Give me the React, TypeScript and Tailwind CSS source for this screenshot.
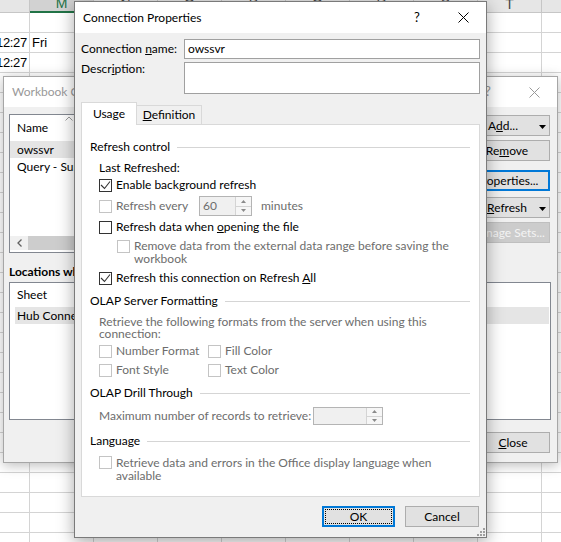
import React from 'react';

const COLS = ['L', 'M', 'N', 'O', 'P', 'Q', 'R', 'S', 'T', 'U'];

function cellText(row: number, col: string) {
  if (row === 1 && col === 'L') return '12:27';
  if (row === 1 && col === 'M') return 'Fri';
  if (row === 2 && col === 'L') return '12:27';
  return '';
}

function Sheet() {
  const rows = Array.from({ length: 27 }, (_, i) => i);
  return (
    <div className="font-['Liberation_Sans',sans-serif]">
      {/* column headers */}
      <div className="flex h-[13px]">
        {COLS.map((c, i) => (
          <div
            key={c}
            className={`${i === 0 ? 'w-[30px]' : 'w-[64px]'} shrink-0 h-[13px] flex justify-center items-end overflow-hidden border-r ${
              c === 'M'
                ? 'bg-[#d2d2d2] border-b-2 border-b-[#217346] border-r-[#c6c6c6] text-[#217346]'
                : 'bg-[#e6e6e6] border-b border-[#c6c6c6] text-[#444]'
            }`}
          >
            {i > 0 && <span className="text-[14px] leading-[14px] mb-[1px]">{c}</span>}
          </div>
        ))}
      </div>
      {rows.map((r) => (
        <div key={r} className="flex h-[20px]">
          {COLS.map((c, i) => (
            <div
              key={c}
              className={`${i === 0 ? 'w-[30px] justify-end pr-[2px] tracking-[-0.3px]' : 'w-[64px] pl-[2px]'} shrink-0 h-[20px] overflow-hidden border-r border-b border-[#d4d4d4] flex items-end pb-[1px] text-[13px] leading-[16px] text-black`}
            >
              {cellText(r, c)}
            </div>
          ))}
        </div>
      ))}
    </div>
  );
}

function XIcon({ color }: { color: string }) {
  return (
    <svg width="11" height="11" viewBox="0 0 11 11">
      <path d="M0.5 0.5 L10.5 10.5 M10.5 0.5 L0.5 10.5" stroke={color} strokeWidth="1" fill="none" />
    </svg>
  );
}

function Box({ checked = false, disabled = false, className = '' }: { checked?: boolean; disabled?: boolean; className?: string }) {
  return (
    <span
      className={`w-[13px] h-[13px] shrink-0 border bg-white flex items-center justify-center ${
        disabled ? 'border-[#c4c4c4]' : 'border-[#333]'
      } ${className}`}
    >
      {checked && (
        <svg width="11" height="11" viewBox="0 0 11 11">
          <path d="M1 5 L4.5 8.5 L10 1.5" fill="none" stroke="#333" strokeWidth="1.1" />
        </svg>
      )}
    </span>
  );
}

function CheckRow({
  checked = false,
  disabled = false,
  className = '',
  children,
}: {
  checked?: boolean;
  disabled?: boolean;
  className?: string;
  children: React.ReactNode;
}) {
  return (
    <div className={`flex items-center gap-[4px] h-[16px] ${className}`}>
      <Box checked={checked} disabled={disabled} />
      <span className={disabled ? 'text-[#6d6d6d]' : 'text-black'}>{children}</span>
    </div>
  );
}

function Group({ title, className = '' }: { title: string; className?: string }) {
  return (
    <div className={`flex items-center gap-[7px] h-[16px] ${className}`}>
      <span>{title}</span>
      <span className="flex-1 h-px bg-[#d5d5d5]" />
    </div>
  );
}

function Tri({ up = false }: { up?: boolean }) {
  return (
    <svg width="5" height="3" viewBox="0 0 5 3">
      <path d={up ? 'M0 3 L2.5 0 L5 3 Z' : 'M0 0 L2.5 3 L5 0 Z'} fill="#8a8a8a" />
    </svg>
  );
}

function Spin({ className, value = '' }: { className: string; value?: string }) {
  return (
    <div className={`flex border border-[#b4b4b4] bg-[#f0f0f0] ${className}`}>
      <span className="flex-1 pl-[3px] text-[#6d6d6d] flex items-center">{value}</span>
      <span className="w-[16px] flex flex-col border-l border-[#d4d4d4] bg-[#f6f6f6]">
        <span className="flex-1 flex items-center justify-center border-b border-[#d4d4d4]">
          <Tri up />
        </span>
        <span className="flex-1 flex items-center justify-center">
          <Tri />
        </span>
      </span>
    </div>
  );
}

function Arrow() {
  return (
    <svg width="7" height="4" viewBox="0 0 7 4" className="absolute right-[3px] top-[9px]">
      <path d="M0 0 L3.5 4 L7 0 Z" fill="#000" />
    </svg>
  );
}

function WorkbookDialog() {
  return (
    <div className="absolute left-[3px] top-[76px] w-[555px] h-[387px] border border-[#a6a6a6] bg-[#f0f0f0] shadow-[0_2px_12px_rgba(0,0,0,0.28)] flex flex-col">
      <div className="h-[30px] shrink-0 bg-white flex items-center pl-[8px] text-[#999]">
        <span className="flex-1">Workbook Connections</span>
        <span className="w-[46px] text-center text-[13px]">?</span>
        <span className="w-[46px] flex justify-center">
          <XIcon color="#999" />
        </span>
      </div>
      <div className="flex-1 pl-[5px] pr-[6px] pt-[7px] flex flex-col">
        <div className="flex gap-[8px]">
          {/* connections list */}
          <div className="w-[447px] h-[139px] shrink-0 border border-[#828790] bg-white flex flex-col">
            <div className="relative h-[26px] pl-[7px] flex items-center">
              Name
              <svg width="8" height="5" viewBox="0 0 8 5" className="absolute left-[55px] top-[1px]">
                <path d="M0.5 4.5 L4 1 L7.5 4.5" fill="none" stroke="#9a9a9a" />
              </svg>
            </div>
            <div className="h-[17px] pl-[7px] bg-[#e5e5e5] flex items-center">owssvr</div>
            <div className="h-[17px] pl-[7px] flex items-center">Query - Summary</div>
            <div className="mt-auto mb-[2px] h-[14px] bg-[#f0f0f0] flex items-center">
              <span className="w-[18px] flex justify-center">
                <svg width="5" height="8" viewBox="0 0 5 8">
                  <path d="M4.5 0.5 L1 4 L4.5 7.5" fill="none" stroke="#606060" strokeWidth="1.3" />
                </svg>
              </span>
              <span className="w-[300px] h-[14px] bg-[#cdcdcd]" />
            </div>
          </div>
          {/* action buttons */}
          <div className="w-[86px] flex flex-col mt-[1px]">
            <div className="relative h-[21px] border border-[#adadad] bg-[#e1e1e1] flex items-center justify-center pr-[8px]">
              A<u>d</u>d...
              <Arrow />
            </div>
            <div className="mt-[4px] h-[21px] border border-[#adadad] bg-[#e1e1e1] flex items-center justify-center">
              Re<u>m</u>ove
            </div>
            <div className="mt-[9px] h-[21px] border-2 border-[#0078d7] bg-[#e1e1e1] flex items-center justify-center">
              Properties...
            </div>
            <div className="relative mt-[6px] h-[21px] border border-[#adadad] bg-[#e1e1e1] flex items-center justify-center">
              <span>
                <u>R</u>efresh
              </span>
              <Arrow />
            </div>
            <div className="mt-[4px] h-[21px] border border-[#bfbfbf] bg-[#cccccc] text-[#f4f4f4] flex items-center justify-center">
              Manage Sets...
            </div>
          </div>
        </div>
        <div className="mt-[11px] h-[16px] leading-[16px] font-bold">
          Locations where this connection is used in this workbook
        </div>
        <div className="mt-[2px] w-[542px] h-[138px] border border-[#828790] bg-white flex flex-col">
          <div className="h-[24px] pl-[7px] flex items-center">Sheet</div>
          <div className="h-[17px] ml-[5px] mr-[1px] pl-[2px] bg-[#e5e5e5] flex items-center">Hub Connections</div>
        </div>
        <div className="self-end mr-[1px] mt-[12px] w-[74px] h-[21px] border border-[#adadad] bg-[#e1e1e1] flex items-center justify-center">
          <u>C</u>lose
        </div>
      </div>
    </div>
  );
}

function ConnectionDialog() {
  const dis = 'text-[#6d6d6d]';
  return (
    <div className="absolute left-[74px] top-[1px] w-[413px] h-[537px] border border-[#7a7a7a] bg-[#f0f0f0] shadow-[0_4px_16px_rgba(0,0,0,0.35)] flex flex-col">
      <div className="h-[31px] shrink-0 bg-white flex items-center pl-[8px]">
        <span className="flex-1">Connection Properties</span>
        <span className="w-[46px] text-center text-[13px]">?</span>
        <span className="w-[46px] flex justify-center">
          <XIcon color="#000" />
        </span>
      </div>

      <div className="relative flex-1 px-[6px] pt-[6px] flex flex-col">
        <div className="grid grid-cols-[103px_1fr] gap-y-[3px]">
          <div className="h-[20px] flex items-center">
            <span>
              Connection <u>n</u>ame:
            </span>
          </div>
          <div className="h-[20px] bg-white border border-[#a0a0a0] flex items-center pl-[3px]">owssvr</div>
          <div className="leading-[14px]">
            Descr<u>i</u>ption:
          </div>
          <div className="h-[32px] bg-white border border-[#a0a0a0]" />
        </div>

        {/* tabs */}
        <div className="mt-[8px] h-[22px] flex items-end">
          <div className="relative z-10 -mb-px w-[56px] h-[23px] bg-white border border-b-0 border-[#d9d9d9] flex items-center justify-center">
            <span>
              Usa<u>g</u>e
            </span>
          </div>
          <div className="w-[65px] h-[19px] border border-l-0 border-b-0 border-[#d9d9d9] flex items-center justify-center">
            <span>
              <u>D</u>efinition
            </span>
          </div>
        </div>

        <div className="h-[373px] bg-white border border-[#d9d9d9] pl-[8px] pr-[9px] pt-[14px] flex flex-col">
          <Group title="Refresh control" />
          <div className="ml-[9px] mt-[5px] h-[16px] leading-[16px]">Last Refreshed:</div>
          <CheckRow checked className="ml-[9px] mt-[1px]">
            Enable back<u>g</u>round refresh
          </CheckRow>
          <div className="ml-[9px] mt-[3px] h-[20px] flex items-center">
            <div className="w-[100px] flex items-center gap-[4px]">
              <Box disabled />
              <span className={dis}>Refresh every</span>
            </div>
            <Spin className="w-[53px] h-[20px]" value="60" />
            <span className={`ml-[9px] ${dis}`}>minutes</span>
          </div>
          <CheckRow className="ml-[9px] mt-[3px]">
            Refresh data when <u>o</u>pening the file
          </CheckRow>
          <div className={`ml-[27px] mt-[4px] flex items-start gap-[4px] leading-[13px] ${dis}`}>
            <Box disabled className="mt-[1px]" />
            <span>
              Remove data from the external data range before saving the
              <br />
              workbook
            </span>
          </div>
          <CheckRow checked className="ml-[9px] mt-[5px]">
            Refresh this connection on Refresh <u>A</u>ll
          </CheckRow>

          <Group title="OLAP Server Formatting" className="mt-[7px]" />
          <div className={`ml-[9px] mt-[7px] leading-[12px] ${dis}`}>
            Retrieve the following formats from the server when using this
            <br />
            connection:
          </div>
          <div className="ml-[9px] mt-[3px] flex">
            <CheckRow disabled className="w-[109px]">
              Number Format
            </CheckRow>
            <CheckRow disabled>Fill Color</CheckRow>
          </div>
          <div className="ml-[9px] mt-[3px] flex">
            <CheckRow disabled className="w-[109px]">
              Font Style
            </CheckRow>
            <CheckRow disabled>Text Color</CheckRow>
          </div>

          <Group title="OLAP Drill Through" className="mt-[7px]" />
          <div className="ml-[9px] mt-[6px] h-[18px] flex items-center">
            <span className={`w-[214px] ${dis}`}>Maximum number of records to retrieve:</span>
            <Spin className="w-[70px] h-[18px]" />
          </div>

          <Group title="Language" className="mt-[8px]" />
          <div className={`ml-[9px] mt-[7px] flex items-start gap-[4px] leading-[13px] ${dis}`}>
            <Box disabled />
            <span>
              Retrieve data and errors in the Office display language when
              <br />
              available
            </span>
          </div>
        </div>

        {/* dialog buttons */}
        <div className="mt-[9px] mr-[1px] flex justify-end gap-[10px]">
          <div className="relative w-[73px] h-[21px] border-2 border-[#0078d7] bg-[#e1e1e1] flex items-center justify-center">
            <span className="absolute inset-[1px] border border-dotted border-black" />
            OK
          </div>
          <div className="w-[74px] h-[21px] border border-[#adadad] bg-[#e1e1e1] flex items-center justify-center">
            Cancel
          </div>
        </div>

        {/* size grip */}
        <svg width="8" height="8" viewBox="0 0 8 8" className="absolute right-[1px] bottom-[1px]">
          <rect x="6" y="0" width="2" height="2" fill="#a0a0a0" />
          <rect x="3" y="3" width="2" height="2" fill="#a0a0a0" />
          <rect x="6" y="3" width="2" height="2" fill="#a0a0a0" />
          <rect x="0" y="6" width="2" height="2" fill="#a0a0a0" />
          <rect x="3" y="6" width="2" height="2" fill="#a0a0a0" />
          <rect x="6" y="6" width="2" height="2" fill="#a0a0a0" />
        </svg>
      </div>
    </div>
  );
}

export default function App() {
  return (
    <div className="relative w-[561px] h-[542px] overflow-hidden bg-white font-['Lato',sans-serif] text-[12px] text-black">
      <Sheet />
      <WorkbookDialog />
      <ConnectionDialog />
    </div>
  );
}
